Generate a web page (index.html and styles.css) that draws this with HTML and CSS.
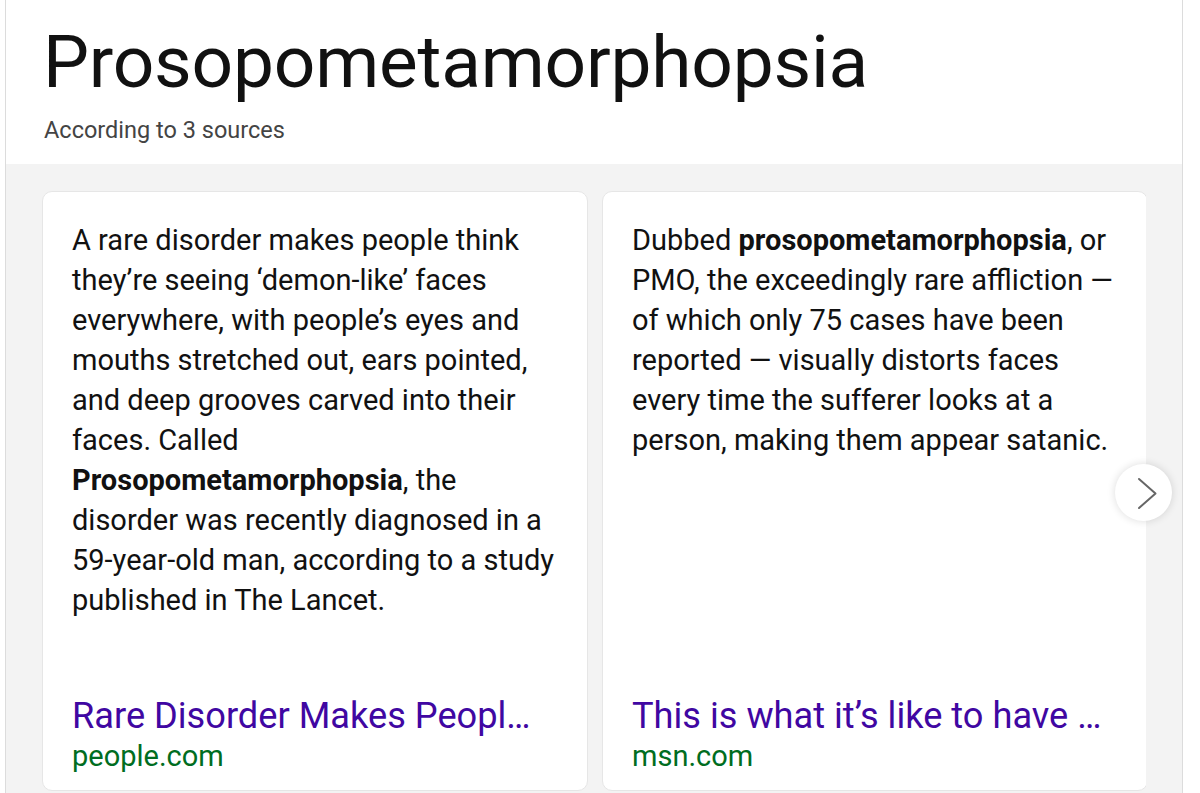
FILE: index.html
```html
<!DOCTYPE html>
<html lang="en">
<head>
<meta charset="utf-8">
<title>Prosopometamorphopsia</title>
<link rel="stylesheet" href="styles.css">
</head>
<body>
<section class="answer">
  <header class="answer-head">
    <h1 class="answer-title">Prosopometamorphopsia</h1>
    <p class="answer-sub">According to 3 sources</p>
  </header>
  <div class="carousel">
    <div class="track">
      <article class="card">
        <p class="snippet">A rare disorder makes people think they’re seeing ‘demon-like’ faces everywhere, with people’s eyes and mouths stretched out, ears pointed, and deep grooves carved into their faces. Called <b>Prosopometamorphopsia</b>, the disorder was recently diagnosed in a 59-year-old man, according to a study published in The Lancet.</p>
        <footer class="source">
          <a class="source-title" href="#">Rare Disorder Makes People Think They’re Seeing Demon-Like Faces</a>
          <cite class="source-url">people.com</cite>
        </footer>
      </article>
      <article class="card">
        <p class="snippet">Dubbed <b>prosopometamorphopsia</b>, or PMO, the exceedingly rare affliction — of which only 75 cases have been reported — visually distorts faces every time the sufferer looks at a person, making them appear satanic.</p>
        <footer class="source">
          <a class="source-title" href="#">This is what it’s like to have prosopometamorphopsia</a>
          <cite class="source-url">msn.com</cite>
        </footer>
      </article>
      <article class="card">
        <p class="snippet">People with prosopometamorphopsia see faces as distorted.</p>
        <footer class="source">
          <a class="source-title" href="#">Prosopometamorphopsia</a>
          <cite class="source-url">wikipedia.org</cite>
        </footer>
      </article>
    </div>
    <button class="next" type="button" aria-label="Next">
      <svg viewBox="0 0 56 56" width="56" height="56"><path d="M23 14 L39.5 28.5 L23 43" fill="none" stroke="#666" stroke-width="2" stroke-linecap="round" stroke-linejoin="round"/></svg>
    </button>
  </div>
</section>
</body>
</html>
```

FILE: styles.css
```css
* { box-sizing: border-box; }

html, body {
  margin: 0;
  padding: 0;
  background: #fff;
  height: 793px;
  overflow: hidden;
}

body {
  font-family: Roboto, "Noto Sans", Arial, sans-serif;
  color: #111;
  padding-left: 5px;
}

.answer {
  width: 1178px;
  border: 1px solid #dcdcdc;
  border-bottom: none;
  border-radius: 12px 12px 0 0;
  margin-top: -14px;
  overflow: hidden;
  height: 820px;
}

.answer-head {
  background: #fff;
  padding: 30px 36px 0 37px;
  height: 177px;
}

.answer-title {
  margin: 0;
  font-weight: 400;
  font-size: 73px;
  line-height: 90px;
  color: #111;
  letter-spacing: -0.2px;
}

.answer-sub {
  margin: 8px 0 0 1px;
  font-size: 23.5px;
  line-height: 30px;
  color: #444;
}

.carousel {
  position: relative;
  background: #f3f3f3;
  padding: 27px 0 0 36px;
  height: 640px;
}

.track {
  display: flex;
  gap: 14px;
  overflow: hidden;
  width: 1104px;
  padding-bottom: 20px;
}

.card {
  flex: 0 0 546px;
  height: 600px;
  background: #fff;
  border: 1px solid #e6e6e6;
  border-radius: 10px;
  padding: 28px 27px 14px 29px;
  display: flex;
  flex-direction: column;
}

.snippet {
  margin: 0;
  font-size: 29px;
  line-height: 40px;
  color: #111;
}

.snippet b { font-weight: 700; }

.source {
  margin-top: auto;
  display: flex;
  flex-direction: column;
}

.source-title {
  font-size: 36.2px;
  line-height: 40px;
  color: #4007a2;
  text-decoration: none;
  white-space: nowrap;
  overflow: hidden;
  text-overflow: ellipsis;
  max-width: 472px;
}

.source-url {
  font-style: normal;
  font-size: 29px;
  line-height: 40px;
  color: #006d21;
}

.next {
  position: absolute;
  top: 300px;
  left: 1109px;
  width: 57px;
  height: 57px;
  border-radius: 50%;
  border: none;
  background: #fff;
  box-shadow: 0 0 8px rgba(0, 0, 0, 0.14);
  display: flex;
  align-items: center;
  justify-content: center;
  padding: 0;
}
```
